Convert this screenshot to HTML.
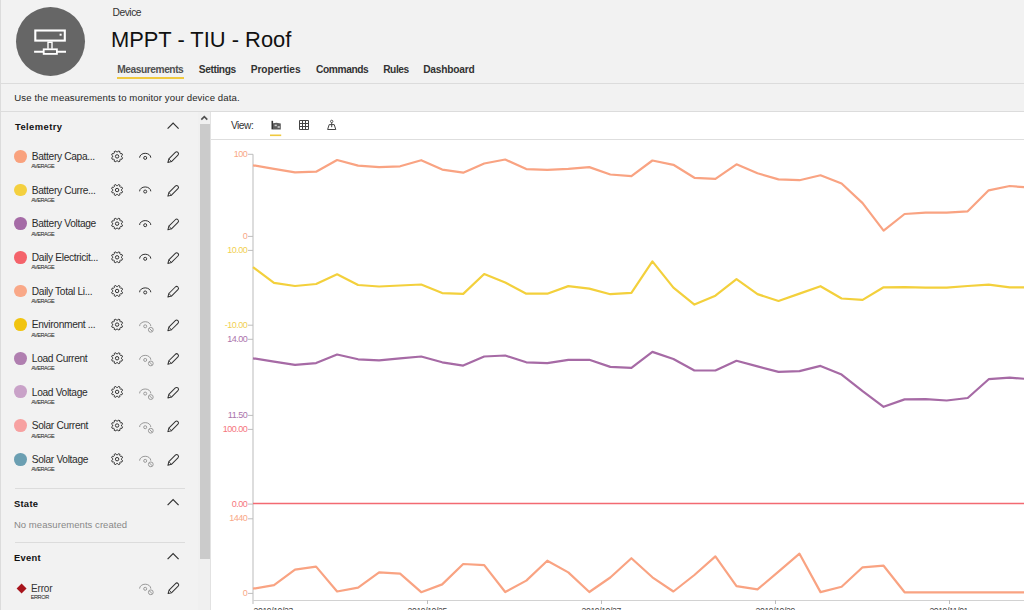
<!DOCTYPE html>
<html><head><meta charset="utf-8">
<style>
html,body{margin:0;padding:0;}
body{width:1024px;height:610px;overflow:hidden;position:relative;background:#f2f2f2;font-family:"Liberation Sans",sans-serif;color:#333;}
.a{position:absolute;white-space:nowrap;line-height:1;}
.hl{position:absolute;height:1px;background:#dcdcdc;}
.dot{position:absolute;left:14.1px;width:12.8px;height:12.8px;border-radius:50%;}
.lab{position:absolute;font-size:9px;line-height:1;text-align:right;width:60px;left:187.2px;letter-spacing:-0.5px;white-space:nowrap;}
</style></head><body>
<div style="position:absolute;left:0;top:0;width:1px;height:610px;background:#dcdcdc"></div>
<div style="position:absolute;left:15.5px;top:6.7px;width:69px;height:69px;border-radius:50%;background:#666"></div>
<svg style="position:absolute;left:0;top:0" width="90" height="80" viewBox="0 0 90 80">
<rect x="35.3" y="30.5" width="29.5" height="10.1" fill="none" stroke="#fff" stroke-width="2.1"/>
<rect x="59.6" y="33.7" width="2" height="2" fill="#fff"/>
<path d="M48,41.6V48.8M52,41.6V48.8M48,42.3H52" fill="none" stroke="#fff" stroke-width="1.4"/>
<rect x="43.7" y="49.3" width="13.2" height="4.6" fill="none" stroke="#fff" stroke-width="1.8"/>
<path d="M34.1,51.7H43.7M56.9,51.7H66" stroke="#fff" stroke-width="2.1"/>
</svg>
<div class="a" style="left:112.5px;top:8.3px;font-size:10.3px;letter-spacing:-0.48px;color:#333;">Device</div>
<div class="a" style="left:110.9px;top:29.0px;font-size:21.9px;letter-spacing:0px;color:#111;">MPPT - TIU - Roof</div>
<div class="a" style="left:117.3px;top:64.9px;font-size:10.2px;letter-spacing:-0.445px;font-weight:700;color:#505050;">Measurements</div>
<div class="a" style="left:198.8px;top:64.9px;font-size:10.2px;letter-spacing:-0.4px;font-weight:700;color:#333;">Settings</div>
<div class="a" style="left:250.7px;top:64.9px;font-size:10.2px;letter-spacing:-0.056px;font-weight:700;color:#333;">Properties</div>
<div class="a" style="left:316.1px;top:64.9px;font-size:10.2px;letter-spacing:-0.4px;font-weight:700;color:#333;">Commands</div>
<div class="a" style="left:383.2px;top:64.9px;font-size:10.2px;letter-spacing:-0.425px;font-weight:700;color:#333;">Rules</div>
<div class="a" style="left:423.2px;top:64.9px;font-size:10.2px;letter-spacing:-0.225px;font-weight:700;color:#333;">Dashboard</div>
<div style="position:absolute;left:117px;top:76.5px;width:67px;height:2px;background:#f0c93f"></div>
<div class="hl" style="left:0;top:83px;width:1024px"></div>
<div class="a" style="left:14.3px;top:92.9px;font-size:9.6px;letter-spacing:0.106px;color:#262626;">Use the measurements to monitor your device data.</div>
<div class="hl" style="left:0;top:111px;width:1024px"></div>
<div class="a" style="left:15.0px;top:121.9px;font-size:9.4px;letter-spacing:0.425px;font-weight:700;color:#111;">Telemetry</div>
<div class="dot" style="top:150.00px;background:#f9a27e"></div>
<div class="a" style="left:31.8px;top:152.1px;font-size:10.2px;letter-spacing:-0.33px;color:#2b2b2b;">Battery Capa...</div>
<div class="a" style="left:31.2px;top:164.4px;font-size:5.6px;letter-spacing:-0.52px;color:#222;">AVERAGE</div>
<div class="dot" style="top:183.64px;background:#f4d03f"></div>
<div class="a" style="left:31.8px;top:185.74px;font-size:10.2px;letter-spacing:-0.33px;color:#2b2b2b;">Battery Curre...</div>
<div class="a" style="left:31.2px;top:198.04px;font-size:5.6px;letter-spacing:-0.52px;color:#222;">AVERAGE</div>
<div class="dot" style="top:217.28px;background:#a56ba6"></div>
<div class="a" style="left:31.8px;top:219.38px;font-size:10.2px;letter-spacing:-0.33px;color:#2b2b2b;">Battery Voltage</div>
<div class="a" style="left:31.2px;top:231.68px;font-size:5.6px;letter-spacing:-0.52px;color:#222;">AVERAGE</div>
<div class="dot" style="top:250.92px;background:#f4636b"></div>
<div class="a" style="left:31.8px;top:253.02px;font-size:10.2px;letter-spacing:-0.33px;color:#2b2b2b;">Daily Electricit...</div>
<div class="a" style="left:31.2px;top:265.32px;font-size:5.6px;letter-spacing:-0.52px;color:#222;">AVERAGE</div>
<div class="dot" style="top:284.56px;background:#f9a888"></div>
<div class="a" style="left:31.8px;top:286.66px;font-size:10.2px;letter-spacing:-0.33px;color:#2b2b2b;">Daily Total Li...</div>
<div class="a" style="left:31.2px;top:298.96px;font-size:5.6px;letter-spacing:-0.52px;color:#222;">AVERAGE</div>
<div class="dot" style="top:318.20px;background:#f1c40f"></div>
<div class="a" style="left:31.8px;top:320.3px;font-size:10.2px;letter-spacing:-0.33px;color:#2b2b2b;">Environment ...</div>
<div class="a" style="left:31.2px;top:332.6px;font-size:5.6px;letter-spacing:-0.52px;color:#222;">AVERAGE</div>
<div class="dot" style="top:351.84px;background:#b07fb0"></div>
<div class="a" style="left:31.8px;top:353.94px;font-size:10.2px;letter-spacing:-0.33px;color:#2b2b2b;">Load Current</div>
<div class="a" style="left:31.2px;top:366.24px;font-size:5.6px;letter-spacing:-0.52px;color:#222;">AVERAGE</div>
<div class="dot" style="top:385.48px;background:#c9a2c8"></div>
<div class="a" style="left:31.8px;top:387.58px;font-size:10.2px;letter-spacing:-0.33px;color:#2b2b2b;">Load Voltage</div>
<div class="a" style="left:31.2px;top:399.88px;font-size:5.6px;letter-spacing:-0.52px;color:#222;">AVERAGE</div>
<div class="dot" style="top:419.12px;background:#f7a1a1"></div>
<div class="a" style="left:31.8px;top:421.22px;font-size:10.2px;letter-spacing:-0.33px;color:#2b2b2b;">Solar Current</div>
<div class="a" style="left:31.2px;top:433.52px;font-size:5.6px;letter-spacing:-0.52px;color:#222;">AVERAGE</div>
<div class="dot" style="top:452.76px;background:#6b9fb2"></div>
<div class="a" style="left:31.8px;top:454.86px;font-size:10.2px;letter-spacing:-0.33px;color:#2b2b2b;">Solar Voltage</div>
<div class="a" style="left:31.2px;top:467.16px;font-size:5.6px;letter-spacing:-0.52px;color:#222;">AVERAGE</div>
<div class="hl" style="left:15px;top:488px;width:170px"></div>
<div class="a" style="left:13.9px;top:498.6px;font-size:9.4px;letter-spacing:0.3px;font-weight:700;color:#111;">State</div>
<div class="a" style="left:13.9px;top:520.0px;font-size:9.5px;letter-spacing:0.059px;color:#888;">No measurements created</div>
<div class="hl" style="left:15px;top:542px;width:170px"></div>
<div class="a" style="left:14.0px;top:552.5px;font-size:9.4px;letter-spacing:0.25px;font-weight:700;color:#111;">Event</div>
<div style="position:absolute;left:17.7px;top:584.7px;width:7.2px;height:7.2px;background:#a8141c;transform:rotate(45deg)"></div>
<div class="a" style="left:30.9px;top:583.5px;font-size:10.0px;letter-spacing:-0.125px;color:#333;">Error</div>
<div class="a" style="left:30.7px;top:595.1px;font-size:5.6px;letter-spacing:-0.425px;color:#222;">ERROR</div>
<svg style="position:absolute;left:0;top:0" width="200" height="610" viewBox="0 0 200 610"><polygon points="121.47,156.90 122.55,157.71 121.87,159.33 120.54,159.14 119.84,159.84 120.03,161.17 118.41,161.85 117.60,160.77 116.60,160.77 115.79,161.85 114.17,161.17 114.36,159.84 113.66,159.14 112.33,159.33 111.65,157.71 112.73,156.90 112.73,155.90 111.65,155.09 112.33,153.47 113.66,153.66 114.36,152.96 114.17,151.63 115.79,150.95 116.60,152.03 117.60,152.03 118.41,150.95 120.03,151.63 119.84,152.96 120.54,153.66 121.87,153.47 122.55,155.09 121.47,155.90" fill="none" stroke="#333" stroke-width="1" stroke-linejoin="round"/><circle cx="117.1" cy="156.4" r="1.7" fill="none" stroke="#333" stroke-width="1"/><path d="M139.60,157.70 A5.6,4.4 0 0 1 150.80,157.70" fill="none" stroke="#333" stroke-width="1"/><circle cx="145.2" cy="157.9" r="1.5" fill="none" stroke="#333" stroke-width="1"/><g transform="rotate(-45 167.9 162.5)"><path d="M167.9,162.5 L171.1,160.65 H180.25 A1.85,1.85 0 0 1 180.25,164.35 H171.1 Z" fill="none" stroke="#333" stroke-width="1" stroke-linejoin="round"/><path d="M171.1,160.65 V164.35" stroke="#333" stroke-width="0.8"/></g><polygon points="121.47,190.54 122.55,191.35 121.87,192.97 120.54,192.78 119.84,193.48 120.03,194.81 118.41,195.49 117.60,194.41 116.60,194.41 115.79,195.49 114.17,194.81 114.36,193.48 113.66,192.78 112.33,192.97 111.65,191.35 112.73,190.54 112.73,189.54 111.65,188.73 112.33,187.11 113.66,187.30 114.36,186.60 114.17,185.27 115.79,184.59 116.60,185.67 117.60,185.67 118.41,184.59 120.03,185.27 119.84,186.60 120.54,187.30 121.87,187.11 122.55,188.73 121.47,189.54" fill="none" stroke="#333" stroke-width="1" stroke-linejoin="round"/><circle cx="117.1" cy="190.04" r="1.7" fill="none" stroke="#333" stroke-width="1"/><path d="M139.60,191.34 A5.6,4.4 0 0 1 150.80,191.34" fill="none" stroke="#333" stroke-width="1"/><circle cx="145.2" cy="191.54" r="1.5" fill="none" stroke="#333" stroke-width="1"/><g transform="rotate(-45 167.9 196.14)"><path d="M167.9,196.14 L171.1,194.29 H180.25 A1.85,1.85 0 0 1 180.25,197.98999999999998 H171.1 Z" fill="none" stroke="#333" stroke-width="1" stroke-linejoin="round"/><path d="M171.1,194.29 V197.98999999999998" stroke="#333" stroke-width="0.8"/></g><polygon points="121.47,224.18 122.55,224.99 121.87,226.61 120.54,226.42 119.84,227.12 120.03,228.45 118.41,229.13 117.60,228.05 116.60,228.05 115.79,229.13 114.17,228.45 114.36,227.12 113.66,226.42 112.33,226.61 111.65,224.99 112.73,224.18 112.73,223.18 111.65,222.37 112.33,220.75 113.66,220.94 114.36,220.24 114.17,218.91 115.79,218.23 116.60,219.31 117.60,219.31 118.41,218.23 120.03,218.91 119.84,220.24 120.54,220.94 121.87,220.75 122.55,222.37 121.47,223.18" fill="none" stroke="#333" stroke-width="1" stroke-linejoin="round"/><circle cx="117.1" cy="223.68" r="1.7" fill="none" stroke="#333" stroke-width="1"/><path d="M139.60,224.98 A5.6,4.4 0 0 1 150.80,224.98" fill="none" stroke="#333" stroke-width="1"/><circle cx="145.2" cy="225.18" r="1.5" fill="none" stroke="#333" stroke-width="1"/><g transform="rotate(-45 167.9 229.78)"><path d="M167.9,229.78 L171.1,227.93 H180.25 A1.85,1.85 0 0 1 180.25,231.63 H171.1 Z" fill="none" stroke="#333" stroke-width="1" stroke-linejoin="round"/><path d="M171.1,227.93 V231.63" stroke="#333" stroke-width="0.8"/></g><polygon points="121.47,257.82 122.55,258.63 121.87,260.25 120.54,260.06 119.84,260.76 120.03,262.09 118.41,262.77 117.60,261.69 116.60,261.69 115.79,262.77 114.17,262.09 114.36,260.76 113.66,260.06 112.33,260.25 111.65,258.63 112.73,257.82 112.73,256.82 111.65,256.01 112.33,254.39 113.66,254.58 114.36,253.88 114.17,252.55 115.79,251.87 116.60,252.95 117.60,252.95 118.41,251.87 120.03,252.55 119.84,253.88 120.54,254.58 121.87,254.39 122.55,256.01 121.47,256.82" fill="none" stroke="#333" stroke-width="1" stroke-linejoin="round"/><circle cx="117.1" cy="257.32" r="1.7" fill="none" stroke="#333" stroke-width="1"/><path d="M139.60,258.62 A5.6,4.4 0 0 1 150.80,258.62" fill="none" stroke="#333" stroke-width="1"/><circle cx="145.2" cy="258.82" r="1.5" fill="none" stroke="#333" stroke-width="1"/><g transform="rotate(-45 167.9 263.42)"><path d="M167.9,263.42 L171.1,261.57 H180.25 A1.85,1.85 0 0 1 180.25,265.27000000000004 H171.1 Z" fill="none" stroke="#333" stroke-width="1" stroke-linejoin="round"/><path d="M171.1,261.57 V265.27000000000004" stroke="#333" stroke-width="0.8"/></g><polygon points="121.47,291.46 122.55,292.27 121.87,293.89 120.54,293.70 119.84,294.40 120.03,295.73 118.41,296.41 117.60,295.33 116.60,295.33 115.79,296.41 114.17,295.73 114.36,294.40 113.66,293.70 112.33,293.89 111.65,292.27 112.73,291.46 112.73,290.46 111.65,289.65 112.33,288.03 113.66,288.22 114.36,287.52 114.17,286.19 115.79,285.51 116.60,286.59 117.60,286.59 118.41,285.51 120.03,286.19 119.84,287.52 120.54,288.22 121.87,288.03 122.55,289.65 121.47,290.46" fill="none" stroke="#333" stroke-width="1" stroke-linejoin="round"/><circle cx="117.1" cy="290.96" r="1.7" fill="none" stroke="#333" stroke-width="1"/><path d="M139.60,292.26 A5.6,4.4 0 0 1 150.80,292.26" fill="none" stroke="#333" stroke-width="1"/><circle cx="145.2" cy="292.46" r="1.5" fill="none" stroke="#333" stroke-width="1"/><g transform="rotate(-45 167.9 297.06)"><path d="M167.9,297.06 L171.1,295.21 H180.25 A1.85,1.85 0 0 1 180.25,298.91 H171.1 Z" fill="none" stroke="#333" stroke-width="1" stroke-linejoin="round"/><path d="M171.1,295.21 V298.91" stroke="#333" stroke-width="0.8"/></g><polygon points="121.47,325.10 122.55,325.91 121.87,327.53 120.54,327.34 119.84,328.04 120.03,329.37 118.41,330.05 117.60,328.97 116.60,328.97 115.79,330.05 114.17,329.37 114.36,328.04 113.66,327.34 112.33,327.53 111.65,325.91 112.73,325.10 112.73,324.10 111.65,323.29 112.33,321.67 113.66,321.86 114.36,321.16 114.17,319.83 115.79,319.15 116.60,320.23 117.60,320.23 118.41,319.15 120.03,319.83 119.84,321.16 120.54,321.86 121.87,321.67 122.55,323.29 121.47,324.10" fill="none" stroke="#333" stroke-width="1" stroke-linejoin="round"/><circle cx="117.1" cy="324.6" r="1.7" fill="none" stroke="#333" stroke-width="1"/><path d="M139.60,326.10 A5.6,4.4 0 0 1 150.80,326.10" fill="none" stroke="#9a9a9a" stroke-width="1"/><circle cx="145.2" cy="326.3" r="1.5" fill="none" stroke="#9a9a9a" stroke-width="1"/><circle cx="150.80" cy="329.80" r="2.4" fill="#f2f2f2" stroke="#9a9a9a" stroke-width="1"/><path d="M149.30,328.30L152.30,331.30" stroke="#9a9a9a" stroke-width="1"/><g transform="rotate(-45 167.9 330.7)"><path d="M167.9,330.7 L171.1,328.84999999999997 H180.25 A1.85,1.85 0 0 1 180.25,332.55 H171.1 Z" fill="none" stroke="#333" stroke-width="1" stroke-linejoin="round"/><path d="M171.1,328.84999999999997 V332.55" stroke="#333" stroke-width="0.8"/></g><polygon points="121.47,358.74 122.55,359.55 121.87,361.17 120.54,360.98 119.84,361.68 120.03,363.01 118.41,363.69 117.60,362.61 116.60,362.61 115.79,363.69 114.17,363.01 114.36,361.68 113.66,360.98 112.33,361.17 111.65,359.55 112.73,358.74 112.73,357.74 111.65,356.93 112.33,355.31 113.66,355.50 114.36,354.80 114.17,353.47 115.79,352.79 116.60,353.87 117.60,353.87 118.41,352.79 120.03,353.47 119.84,354.80 120.54,355.50 121.87,355.31 122.55,356.93 121.47,357.74" fill="none" stroke="#333" stroke-width="1" stroke-linejoin="round"/><circle cx="117.1" cy="358.24" r="1.7" fill="none" stroke="#333" stroke-width="1"/><path d="M139.60,359.74 A5.6,4.4 0 0 1 150.80,359.74" fill="none" stroke="#9a9a9a" stroke-width="1"/><circle cx="145.2" cy="359.94" r="1.5" fill="none" stroke="#9a9a9a" stroke-width="1"/><circle cx="150.80" cy="363.44" r="2.4" fill="#f2f2f2" stroke="#9a9a9a" stroke-width="1"/><path d="M149.30,361.94L152.30,364.94" stroke="#9a9a9a" stroke-width="1"/><g transform="rotate(-45 167.9 364.34)"><path d="M167.9,364.34 L171.1,362.48999999999995 H180.25 A1.85,1.85 0 0 1 180.25,366.19 H171.1 Z" fill="none" stroke="#333" stroke-width="1" stroke-linejoin="round"/><path d="M171.1,362.48999999999995 V366.19" stroke="#333" stroke-width="0.8"/></g><polygon points="121.47,392.38 122.55,393.19 121.87,394.81 120.54,394.62 119.84,395.32 120.03,396.65 118.41,397.33 117.60,396.25 116.60,396.25 115.79,397.33 114.17,396.65 114.36,395.32 113.66,394.62 112.33,394.81 111.65,393.19 112.73,392.38 112.73,391.38 111.65,390.57 112.33,388.95 113.66,389.14 114.36,388.44 114.17,387.11 115.79,386.43 116.60,387.51 117.60,387.51 118.41,386.43 120.03,387.11 119.84,388.44 120.54,389.14 121.87,388.95 122.55,390.57 121.47,391.38" fill="none" stroke="#333" stroke-width="1" stroke-linejoin="round"/><circle cx="117.1" cy="391.88" r="1.7" fill="none" stroke="#333" stroke-width="1"/><path d="M139.60,393.38 A5.6,4.4 0 0 1 150.80,393.38" fill="none" stroke="#9a9a9a" stroke-width="1"/><circle cx="145.2" cy="393.58" r="1.5" fill="none" stroke="#9a9a9a" stroke-width="1"/><circle cx="150.80" cy="397.08" r="2.4" fill="#f2f2f2" stroke="#9a9a9a" stroke-width="1"/><path d="M149.30,395.58L152.30,398.58" stroke="#9a9a9a" stroke-width="1"/><g transform="rotate(-45 167.9 397.98)"><path d="M167.9,397.98 L171.1,396.13 H180.25 A1.85,1.85 0 0 1 180.25,399.83000000000004 H171.1 Z" fill="none" stroke="#333" stroke-width="1" stroke-linejoin="round"/><path d="M171.1,396.13 V399.83000000000004" stroke="#333" stroke-width="0.8"/></g><polygon points="121.47,426.02 122.55,426.83 121.87,428.45 120.54,428.26 119.84,428.96 120.03,430.29 118.41,430.97 117.60,429.89 116.60,429.89 115.79,430.97 114.17,430.29 114.36,428.96 113.66,428.26 112.33,428.45 111.65,426.83 112.73,426.02 112.73,425.02 111.65,424.21 112.33,422.59 113.66,422.78 114.36,422.08 114.17,420.75 115.79,420.07 116.60,421.15 117.60,421.15 118.41,420.07 120.03,420.75 119.84,422.08 120.54,422.78 121.87,422.59 122.55,424.21 121.47,425.02" fill="none" stroke="#333" stroke-width="1" stroke-linejoin="round"/><circle cx="117.1" cy="425.52" r="1.7" fill="none" stroke="#333" stroke-width="1"/><path d="M139.60,427.02 A5.6,4.4 0 0 1 150.80,427.02" fill="none" stroke="#9a9a9a" stroke-width="1"/><circle cx="145.2" cy="427.22" r="1.5" fill="none" stroke="#9a9a9a" stroke-width="1"/><circle cx="150.80" cy="430.72" r="2.4" fill="#f2f2f2" stroke="#9a9a9a" stroke-width="1"/><path d="M149.30,429.22L152.30,432.22" stroke="#9a9a9a" stroke-width="1"/><g transform="rotate(-45 167.9 431.62)"><path d="M167.9,431.62 L171.1,429.77 H180.25 A1.85,1.85 0 0 1 180.25,433.47 H171.1 Z" fill="none" stroke="#333" stroke-width="1" stroke-linejoin="round"/><path d="M171.1,429.77 V433.47" stroke="#333" stroke-width="0.8"/></g><polygon points="121.47,459.66 122.55,460.47 121.87,462.09 120.54,461.90 119.84,462.60 120.03,463.93 118.41,464.61 117.60,463.53 116.60,463.53 115.79,464.61 114.17,463.93 114.36,462.60 113.66,461.90 112.33,462.09 111.65,460.47 112.73,459.66 112.73,458.66 111.65,457.85 112.33,456.23 113.66,456.42 114.36,455.72 114.17,454.39 115.79,453.71 116.60,454.79 117.60,454.79 118.41,453.71 120.03,454.39 119.84,455.72 120.54,456.42 121.87,456.23 122.55,457.85 121.47,458.66" fill="none" stroke="#333" stroke-width="1" stroke-linejoin="round"/><circle cx="117.1" cy="459.16" r="1.7" fill="none" stroke="#333" stroke-width="1"/><path d="M139.60,460.66 A5.6,4.4 0 0 1 150.80,460.66" fill="none" stroke="#9a9a9a" stroke-width="1"/><circle cx="145.2" cy="460.86" r="1.5" fill="none" stroke="#9a9a9a" stroke-width="1"/><circle cx="150.80" cy="464.36" r="2.4" fill="#f2f2f2" stroke="#9a9a9a" stroke-width="1"/><path d="M149.30,462.86L152.30,465.86" stroke="#9a9a9a" stroke-width="1"/><g transform="rotate(-45 167.9 465.26)"><path d="M167.9,465.26 L171.1,463.40999999999997 H180.25 A1.85,1.85 0 0 1 180.25,467.11 H171.1 Z" fill="none" stroke="#333" stroke-width="1" stroke-linejoin="round"/><path d="M171.1,463.40999999999997 V467.11" stroke="#333" stroke-width="0.8"/></g><path d="M139.60,588.60 A5.6,4.4 0 0 1 150.80,588.60" fill="none" stroke="#9a9a9a" stroke-width="1"/><circle cx="145.2" cy="588.8" r="1.5" fill="none" stroke="#9a9a9a" stroke-width="1"/><circle cx="150.80" cy="592.30" r="2.4" fill="#f2f2f2" stroke="#9a9a9a" stroke-width="1"/><path d="M149.30,590.80L152.30,593.80" stroke="#9a9a9a" stroke-width="1"/><g transform="rotate(-45 168.1 593.6)"><path d="M168.1,593.6 L171.29999999999998,591.75 H180.45 A1.85,1.85 0 0 1 180.45,595.45 H171.29999999999998 Z" fill="none" stroke="#333" stroke-width="1" stroke-linejoin="round"/><path d="M171.29999999999998,591.75 V595.45" stroke="#333" stroke-width="0.8"/></g><path d="M167.6,128.6 L173.1,123.1 L178.6,128.6" fill="none" stroke="#333" stroke-width="1.2"/><path d="M167.6,505.2 L173.1,499.7 L178.6,505.2" fill="none" stroke="#333" stroke-width="1.2"/><path d="M167.6,559.2 L173.1,553.7 L178.6,559.2" fill="none" stroke="#333" stroke-width="1.2"/></svg>
<div style="position:absolute;left:198px;top:112px;width:12px;height:498px;background:#f0f0f0"></div>
<div style="position:absolute;left:199.7px;top:123.7px;width:10px;height:435px;background:#cbcbcb"></div>
<svg style="position:absolute;left:199px;top:113px" width="11" height="10" viewBox="0 0 11 10"><path d="M2.3,6.6L5.3,3.6L8.3,6.6" fill="none" stroke="#505050" stroke-width="1.6"/></svg>
<div style="position:absolute;left:210px;top:112px;width:1px;height:498px;background:#e2e2e2"></div>
<div style="position:absolute;left:211px;top:112px;width:813px;height:498px;background:#fff"></div>
<div class="a" style="left:230.9px;top:121.2px;font-size:10.2px;letter-spacing:-0.45px;color:#333;">View:</div>
<svg style="position:absolute;left:260px;top:112px" width="90" height="30" viewBox="260 112 90 30">
<path d="M272.3,120.8V129.4" stroke="#333" stroke-width="1.6"/>
<path d="M273,129.4V123.2L276.5,122.7L280.8,123.6V129.4Z" fill="#5c5c5c"/>
<rect x="274.6" y="124.6" width="2.2" height="1.6" fill="#cfcfcf"/><rect x="277.6" y="126.2" width="2.2" height="1.6" fill="#cfcfcf"/>
<rect x="270" y="134.5" width="11.2" height="1.6" fill="#f0c93f"/>
<path d="M299.5,120.5H308.5V129.5H299.5Z M299.5,123.5H308.5M299.5,126.5H308.5M302.5,120.5V129.5M305.5,120.5V129.5" fill="none" stroke="#444" stroke-width="1"/>
<path d="M327.6,129.5H335.8L334.2,124.6H329.2Z M331.7,122.6V127.2" fill="none" stroke="#444" stroke-width="1"/><circle cx="331.7" cy="121.4" r="1.2" fill="none" stroke="#444" stroke-width="0.9"/>
</svg>
<div class="hl" style="left:211px;top:139px;width:813px;background:#dedede"></div>
<svg style="position:absolute;left:0;top:0" width="1024" height="610" viewBox="0 0 1024 610">
<g stroke="#d2d2d2" fill="none">
<path d="M253,154.3V604" stroke-width="1.5"/>
<path d="M253,600.5H1024" stroke-width="1.2"/>
<path d="M248,154.3H253M248,236.4H253M248,250.4H253M248,325.2H253M248,339.3H253M248,415.4H253M248,429.4H253M248,504.1H253M248,518.8H253M248,593.4H253" stroke="#bdbdbd" stroke-width="1"/>
<path d="M427.5,600V604M601.5,600V604M775.5,600V604M949.5,600V604" stroke="#bdbdbd"/>
</g>
<g fill="none" stroke-width="2.2" stroke-linejoin="round">
<polyline points="253.0,165.3 274.0,168.8 295.0,172.4 316.1,171.7 337.1,160.0 358.1,165.6 379.1,167.1 400.1,166.3 421.2,160.2 442.2,169.6 463.2,172.7 484.2,163.5 505.2,159.5 526.3,169.1 547.3,169.9 568.3,168.9 589.3,167.1 610.3,174.5 631.4,176.2 652.4,160.5 673.4,164.8 694.4,177.8 715.4,178.8 736.5,164.3 757.5,173.2 778.5,179.4 799.5,180.2 820.5,175.3 841.6,183.5 862.6,203.1 883.6,230.7 904.6,214.0 925.6,212.7 946.7,212.7 967.7,211.3 988.7,190.3 1009.7,186.0 1030.7,187.8" stroke="#f9a382"/>
<polyline points="253.0,267.2 274.0,282.9 295.0,286.0 316.1,284.0 337.1,274.3 358.1,285.0 379.1,286.5 400.1,285.5 421.2,284.5 442.2,293.1 463.2,293.9 484.2,274.0 505.2,282.5 526.3,293.7 547.3,293.7 568.3,286.1 589.3,288.6 610.3,294.2 631.4,292.9 652.4,261.4 673.4,287.6 694.4,304.6 715.4,295.7 736.5,279.2 757.5,294.1 778.5,301.0 799.5,293.6 820.5,286.2 841.6,298.5 862.6,299.9 883.6,287.3 904.6,287.1 925.6,287.6 946.7,287.6 967.7,286.0 988.7,284.6 1009.7,287.3 1030.7,287.3" stroke="#f3d03c"/>
<polyline points="253.0,358.3 274.0,361.6 295.0,364.9 316.1,363.1 337.1,354.5 358.1,359.3 379.1,360.3 400.1,358.3 421.2,356.5 442.2,362.3 463.2,365.6 484.2,356.5 505.2,355.5 526.3,362.3 547.3,363.1 568.3,359.8 589.3,359.8 610.3,366.9 631.4,367.9 652.4,351.9 673.4,359.0 694.4,370.5 715.4,370.5 736.5,360.8 757.5,366.4 778.5,371.9 799.5,371.1 820.5,365.9 841.6,374.6 862.6,391.2 883.6,406.8 904.6,399.4 925.6,399.1 946.7,400.5 967.7,398.0 988.7,379.2 1009.7,377.6 1030.7,379.3" stroke="#a66aa5"/>
<path d="M253,503.5H1024" stroke="#f36a72" stroke-width="1.7"/>
<polyline points="253.0,588.7 274.0,585.1 295.0,569.6 316.1,566.6 337.1,591.5 358.1,587.7 379.1,572.4 400.1,573.7 421.2,592.2 442.2,584.4 463.2,564.0 484.2,565.1 505.2,592.0 526.3,580.6 547.3,560.7 568.3,572.4 589.3,592.0 610.3,577.5 631.4,558.2 652.4,577.3 673.4,591.5 694.4,575.0 715.4,556.4 736.5,586.1 757.5,589.4 778.5,571.7 799.5,553.7 820.5,592.1 841.6,586.7 862.6,567.3 883.6,565.7 904.6,592.3 925.6,592.3 946.7,592.3 967.7,592.3 988.7,592.3 1009.7,592.3 1030.7,592.3" stroke="#f9a382"/>
</g>
</svg>
<div class="lab" style="top:149.8px;color:#f9a886">100</div>
<div class="lab" style="top:231.9px;color:#f9a886">0</div>
<div class="lab" style="top:245.9px;color:#f1d050">10.00</div>
<div class="lab" style="top:320.7px;color:#f1d050">-10.00</div>
<div class="lab" style="top:334.8px;color:#ab74ab">14.00</div>
<div class="lab" style="top:410.9px;color:#ab74ab">11.50</div>
<div class="lab" style="top:424.9px;color:#f5767d">100.00</div>
<div class="lab" style="top:499.6px;color:#f5767d">0.00</div>
<div class="lab" style="top:514.3px;color:#f9a886">1440</div>
<div class="lab" style="top:588.9px;color:#f9a886">0</div>
<div class="a" style="left:253.6px;top:606.6px;font-size:8.6px;letter-spacing:-0.378px;color:#444;">2019/10/23</div>
<div class="a" style="left:407.6px;top:606.6px;font-size:8.6px;letter-spacing:-0.378px;color:#444;">2019/10/25</div>
<div class="a" style="left:581.6px;top:606.6px;font-size:8.6px;letter-spacing:-0.378px;color:#444;">2019/10/27</div>
<div class="a" style="left:755.6px;top:606.6px;font-size:8.6px;letter-spacing:-0.378px;color:#444;">2019/10/29</div>
<div class="a" style="left:929.4px;top:606.6px;font-size:8.6px;letter-spacing:-0.378px;color:#444;">2019/11/01</div>
</body></html>
